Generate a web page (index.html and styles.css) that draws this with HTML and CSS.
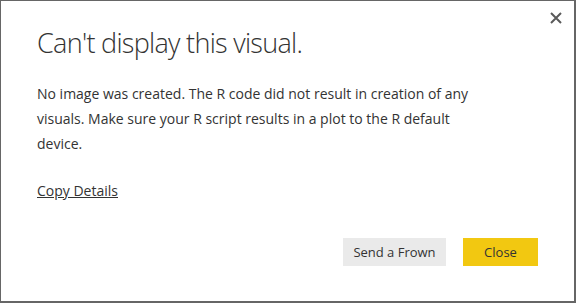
FILE: index.html
```html
<!DOCTYPE html>
<html lang="en">
<head>
  <meta charset="utf-8">
  <title>Can't display this visual</title>
  <link rel="stylesheet" href="styles.css">
</head>
<body>

  <div class="dialog">
    <!-- Close icon -->
    <button class="dialog-close" aria-label="Close">
      <svg width="12" height="12" viewBox="0 0 12 12">
        <path d="M1 1 L11 11 M11 1 L1 11" stroke="#5a5a5a" stroke-width="2" fill="none"/>
      </svg>
    </button>

    <h1 class="dialog-title">Can't display this visual.</h1>

    <p class="dialog-message">No image was created. The R code did not result in creation of any visuals. Make sure your R script results in a plot to the R default device.</p>

    <a class="copy-details" href="#">Copy Details</a>

    <div class="dialog-actions">
      <button class="btn btn-secondary">Send a Frown</button>
      <button class="btn btn-primary">Close</button>
    </div>
  </div>

</body>
</html>
```

FILE: styles.css
```css
/* Dialog styles */
body {
  margin: 0;
  padding: 0;
  font-family: "Open Sans", Arial, sans-serif;
  color: #333;
}

.dialog {
  position: relative;
  width: 576px;
  height: 303px;
  box-sizing: border-box;
  border-style: solid;
  border-color: #666;
  border-width: 1px 2px 2px 1px;
  background-color: #fff;
  padding: 22px 36px 0 36px;
  display: flex;
  flex-direction: column;
}

.dialog-close {
  position: absolute;
  top: 11px;
  right: 12px;
  background: none;
  border: none;
  padding: 0;
  cursor: pointer;
  line-height: 0;
}

.dialog-title {
  margin: 0;
  font-size: 27px;
  font-weight: 300;
  letter-spacing: -0.7px;
  line-height: 40px;
  color: #333;
}

.dialog-message {
  margin: 18px 0 0 0;
  font-size: 14px;
  line-height: 25px;
  width: 445px;
}

.copy-details {
  align-self: flex-start;
  margin-top: 25px;
  font-size: 14px;
  line-height: 20px;
  color: #333;
}

.dialog-actions {
  display: flex;
  justify-content: flex-end;
  gap: 17px;
  margin-top: 37px;
}

.btn {
  height: 28px;
  border: none;
  font-family: inherit;
  font-size: 13px;
  color: #333;
  cursor: pointer;
}

.btn-secondary {
  width: 103px;
  background-color: #eaeaea;
}

.btn-primary {
  width: 75px;
  background-color: #f2c811;
}
```
